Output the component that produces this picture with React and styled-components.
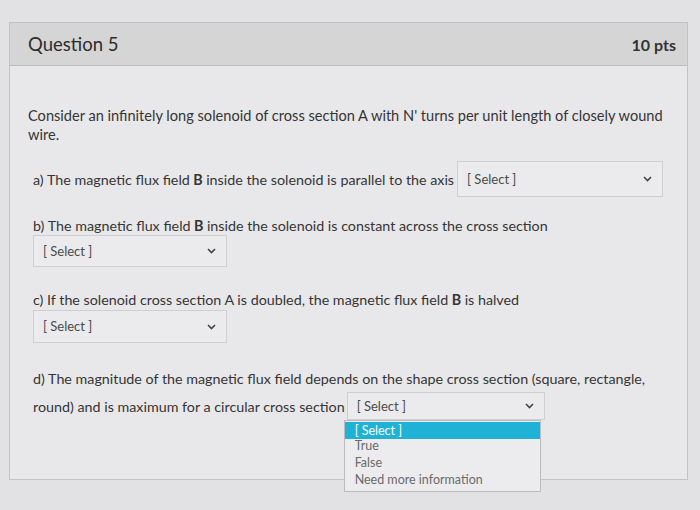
import React from "react";
import styled, { createGlobalStyle } from "styled-components";

const Global = createGlobalStyle`
  html, body { margin: 0; padding: 0; }
  body {
    background: #e2e2e4;
    font-family: Lato, "Open Sans", sans-serif;
    color: #353535;
    width: 700px;
    height: 510px;
    overflow: hidden;
  }
`;

const Page = styled.div`
  padding: 22px 12px 0 9px;
`;

const Card = styled.div`
  border: 1px solid #c3c3c5;
  background: #e8e8ea;
  height: 458px;
  box-sizing: border-box;
`;

const Header = styled.div`
  height: 42px;
  background: #d5d5d5;
  border-bottom: 1px solid #bdbdbd;
  display: flex;
  align-items: center;
  justify-content: space-between;
  padding: 0 11px 0 18px;
  font-size: 18.5px;
  color: #2c2c2c;
`;

const Points = styled.span`
  font-weight: 700;
  font-size: 16px;
  color: #333;
`;

const Body = styled.div`
  padding: 40px 16px 0 18px;
  display: flex;
  flex-direction: column;
  font-size: 14.3px;
  line-height: 19px;
`;

const Intro = styled.p`
  margin: 0;
  max-width: 645px;
  font-size: 14.6px;
`;

const Block = styled.div`
  margin-top: ${(p) => p.$gap}px;
  padding-left: 5px;
  display: flex;
  flex-direction: column;
  align-items: flex-start;
  gap: ${(p) => p.$inner || 0}px;
`;

const Line = styled.div`
  display: flex;
  align-items: center;
  white-space: nowrap;
`;

const SelectWrap = styled.div`
  position: relative;
  margin-left: ${(p) => p.$ml || 0}px;
`;

const SelectBox = styled.div`
  box-sizing: border-box;
  width: ${(p) => p.$w}px;
  height: ${(p) => p.$h}px;
  border: 1px solid #cfcfd1;
  background: #ebebed;
  display: flex;
  align-items: center;
  justify-content: space-between;
  padding: 0 10px 0 9px;
  font-size: 13px;
  color: #4a4a4a;
`;

const Chevron = () => (
  <svg width="9" height="6" viewBox="0 0 9 6">
    <polyline points="1,1 4.5,4.5 8,1" fill="none" stroke="#444" strokeWidth="1.6" />
  </svg>
);

const Menu = styled.div`
  position: absolute;
  top: 100%;
  left: -3px;
  width: 197px;
  box-sizing: border-box;
  border: 1px solid #bcbcbe;
  background: #ececee;
  padding: 1px 0 3px;
  font-size: 12.5px;
  line-height: 17px;
  color: #6a6a6a;
`;

const Option = styled.div`
  padding: 0 10px;
  background: ${(p) => (p.$active ? "#1db2d6" : "transparent")};
  color: ${(p) => (p.$active ? "#ffffff" : "#6a6a6a")};
  height: 17px;
  margin-bottom: ${(p) => (p.$active ? -2 : 0)}px;
`;

const Select = ({ w, h, ml, open }) => (
  <SelectWrap $ml={ml}>
    <SelectBox $w={w} $h={h}>
      <span>[ Select ]</span>
      <Chevron />
    </SelectBox>
    {open && (
      <Menu>
        <Option $active>[ Select ]</Option>
        <Option>True</Option>
        <Option>False</Option>
        <Option>Need more information</Option>
      </Menu>
    )}
  </SelectWrap>
);

export default function App() {
  return (
    <>
      <Global />
      <Page>
        <Card>
          <Header>
            <span>Question 5</span>
            <Points>10 pts</Points>
          </Header>
          <Body>
            <Intro>
              Consider an infinitely long solenoid of cross section A with N' turns per unit length of closely wound wire.
            </Intro>
            <Block $gap={17}>
              <Line>
                a) The magnetic flux field <b>&nbsp;B&nbsp;</b> inside the solenoid is parallel to the axis
                <Select w={206} h={36} ml={3} />
              </Line>
            </Block>
            <Block $gap={19}>
              <Line>
                b) The magnetic flux field <b>&nbsp;B&nbsp;</b> inside the solenoid is constant across the cross section
              </Line>
              <Select w={194} h={32} />
            </Block>
            <Block $gap={23} $inner={1}>
              <Line>
                c) If the solenoid cross section A is doubled, the magnetic flux field <b>&nbsp;B&nbsp;</b> is halved
              </Line>
              <Select w={194} h={33} />
            </Block>
            <Block $gap={26} $inner={4}>
              <Line>
                d) The magnitude of the magnetic flux field depends on the shape cross section (square, rectangle,
              </Line>
              <Line>
                round) and is maximum for a circular cross section
                <Select w={198} h={28} ml={2} open />
              </Line>
            </Block>
          </Body>
        </Card>
      </Page>
    </>
  );
}
